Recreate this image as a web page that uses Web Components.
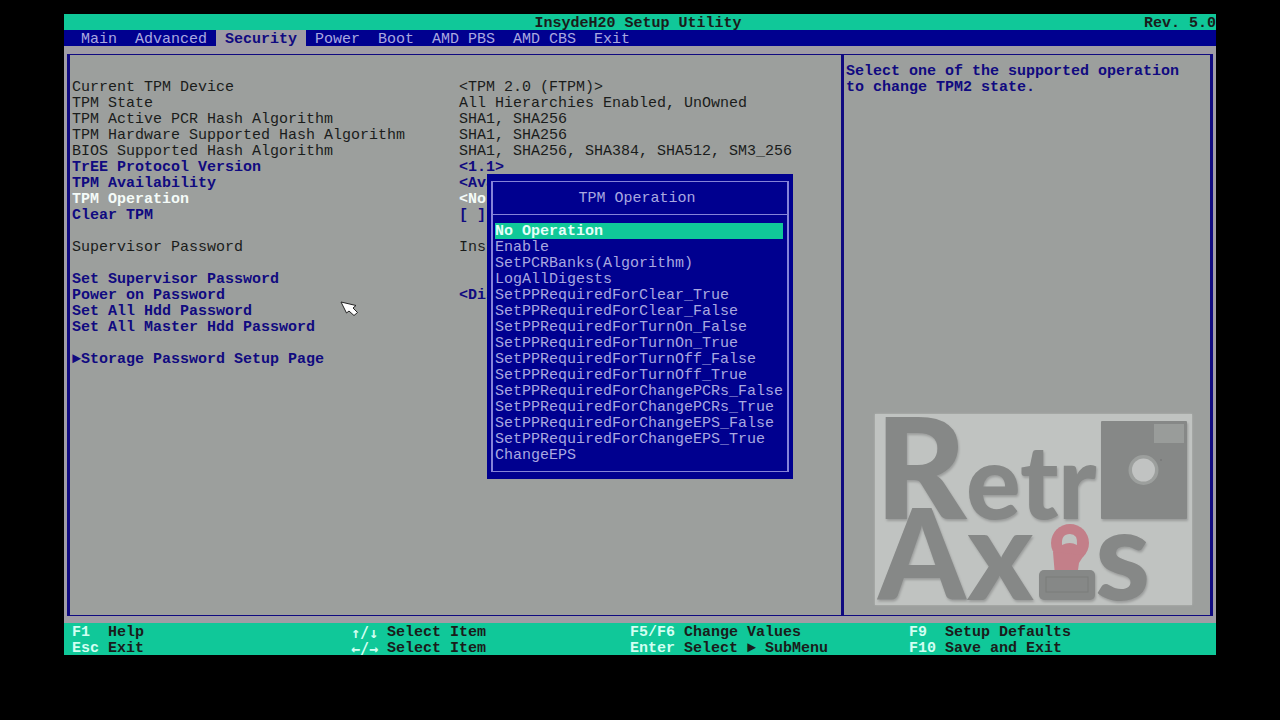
<!DOCTYPE html>
<html lang="en">
<head>
<meta charset="utf-8">
<title>InsydeH20 Setup Utility</title>
<style>
  html { background: #000; }
  body {
    margin: 0;
    font: 15px/18px "Liberation Mono", "DejaVu Sans Mono", monospace;
    --row: 16px;
    --bar-line: 20px;
    --teal: #10c899;
    --navy: #00008f;
    --ink-blue: #100a80;
    --ink: #1a1c1b;
    --panel: #9c9f9d;
    --edge: #a09da5;
    --lilac: #a9a8e0;
    --white: #f4fbf8;
  }
</style>
</head>
<body>
<setup-screen>
  <title-bar slot="top">InsydeH20 Setup Utility<span slot="rev">Rev. 5.0</span></title-bar>
  <menu-bar slot="top">
    <menu-tab>Main</menu-tab>
    <menu-tab>Advanced</menu-tab>
    <menu-tab current>Security</menu-tab>
    <menu-tab>Power</menu-tab>
    <menu-tab>Boot</menu-tab>
    <menu-tab>AMD PBS</menu-tab>
    <menu-tab>AMD CBS</menu-tab>
    <menu-tab>Exit</menu-tab>
  </menu-bar>

  <setting-row label="Current TPM Device">&lt;TPM 2.0 (FTPM)&gt;</setting-row>
  <setting-row label="TPM State">All Hierarchies Enabled, UnOwned</setting-row>
  <setting-row label="TPM Active PCR Hash Algorithm">SHA1, SHA256</setting-row>
  <setting-row label="TPM Hardware Supported Hash Algorithm">SHA1, SHA256</setting-row>
  <setting-row label="BIOS Supported Hash Algorithm">SHA1, SHA256, SHA384, SHA512, SM3_256</setting-row>
  <setting-row kind="select" label="TrEE Protocol Version" value="1.1"></setting-row>
  <setting-row kind="select" label="TPM Availability" value="Available"></setting-row>
  <setting-row kind="select" label="TPM Operation" value="No Operation" active></setting-row>
  <setting-row kind="check" label="Clear TPM"></setting-row>
  <setting-row gap label="Supervisor Password">Installed</setting-row>
  <setting-row gap kind="action" label="Set Supervisor Password"></setting-row>
  <setting-row kind="select" label="Power on Password" value="Disabled"></setting-row>
  <setting-row kind="action" label="Set All Hdd Password"></setting-row>
  <setting-row kind="action" label="Set All Master Hdd Password"></setting-row>
  <setting-row gap kind="page" label="Storage Password Setup Page"></setting-row>

  <span slot="help">Select one of the supported operation to change TPM2 state.</span>

  <key-hints slot="keys">
    <key-hint key="F1">Help</key-hint>
    <key-hint key="↑/↓">Select Item</key-hint>
    <key-hint key="F5/F6" wide>Change Values</key-hint>
    <key-hint key="F9">Setup Defaults</key-hint>
    <key-hint key="Esc">Exit</key-hint>
    <key-hint key="←/→">Select Item</key-hint>
    <key-hint key="Enter" wide>Select ► SubMenu</key-hint>
    <key-hint key="F10">Save and Exit</key-hint>
  </key-hints>

  <brand-mark slot="over"></brand-mark>
  <option-popup slot="over" heading="TPM Operation">
    <popup-option selected>No Operation</popup-option>
    <popup-option>Enable</popup-option>
    <popup-option>SetPCRBanks(Algorithm)</popup-option>
    <popup-option>LogAllDigests</popup-option>
    <popup-option>SetPPRequiredForClear_True</popup-option>
    <popup-option>SetPPRequiredForClear_False</popup-option>
    <popup-option>SetPPRequiredForTurnOn_False</popup-option>
    <popup-option>SetPPRequiredForTurnOn_True</popup-option>
    <popup-option>SetPPRequiredForTurnOff_False</popup-option>
    <popup-option>SetPPRequiredForTurnOff_True</popup-option>
    <popup-option>SetPPRequiredForChangePCRs_False</popup-option>
    <popup-option>SetPPRequiredForChangePCRs_True</popup-option>
    <popup-option>SetPPRequiredForChangeEPS_False</popup-option>
    <popup-option>SetPPRequiredForChangeEPS_True</popup-option>
    <popup-option>ChangeEPS</popup-option>
  </option-popup>
  <mouse-pointer slot="over"></mouse-pointer>
</setup-screen>

<script>
const define = (name, render, ready) => customElements.define(name, class extends HTMLElement {
  constructor() {
    super();
    this.attachShadow({ mode: "open" });
  }
  connectedCallback() {
    this.shadowRoot.innerHTML = render(this);
    if (ready) ready(this);
  }
});
const esc = s => (s || "").replace(/&/g, "&amp;").replace(/</g, "&lt;").replace(/>/g, "&gt;");

define("setup-screen", () => `
  <style>
    :host { display: flex; min-height: 100vh; box-sizing: border-box; padding: 14px 5% 65px; background: #000; }
    .screen { position: relative; flex: 1; min-width: 0; display: flex; flex-direction: column; background: var(--edge); }
    main { flex: 1; display: grid; grid-template-columns: minmax(0, 1fr) 41ch; padding: 8px 3px 7px; }
    section, aside {
      box-sizing: border-box; background: var(--panel);
      border: solid var(--ink-blue); border-width: 1px 3px 1px 3px;
    }
    section { padding: 24px 2px; }
    aside {
      border-left: 0; padding: 9px 2ch 9px 2px;
      color: var(--ink-blue); font-weight: bold; line-height: var(--row);
    }
  </style>
  <div class="screen">
    <slot name="top"></slot>
    <main><section><slot></slot></section><aside><slot name="help"></slot></aside></main>
    <slot name="keys"></slot>
    <slot name="over"></slot>
  </div>`);

define("title-bar", () => `
  <style>
    :host { display: block; background: var(--teal); color: var(--ink); line-height: var(--bar-line); }
    header { display: grid; grid-template-columns: 1fr auto 1fr; height: var(--row); font-weight: bold; }
    h1 { margin: 0; padding-right: 4px; grid-column: 2; font: inherit; }
    .rev { text-align: right; }
  </style>
  <header><h1><slot></slot></h1><div class="rev"><slot name="rev"></slot></div></header>`);

define("menu-bar", () => `
  <style>
    :host { display: block; background: var(--navy); line-height: var(--bar-line); }
    nav { display: flex; height: var(--row); padding-left: 8px; }
  </style>
  <nav><slot></slot></nav>`);

define("menu-tab", el => `
  <style>
    :host { display: block; }
    a { display: block; height: var(--row); padding: 0 1ch; color: var(--lilac); text-decoration: none; white-space: nowrap; }
    a[aria-current] { background: var(--edge); color: var(--ink-blue); font-weight: bold; }
  </style>
  <a href="#" ${el.hasAttribute("current") ? 'aria-current="page"' : ""}><slot></slot></a>`);

define("setting-row", el => {
  const kind = el.getAttribute("kind");
  const label = esc(el.getAttribute("label"));
  const views = {
    select: () => `<label for="v">${label}</label>
      <select id="v"><option>&lt;${esc(el.getAttribute("value"))}&gt;</option></select>`,
    check: () => `<label for="v">${label}</label><span class="box">[<input id="v" type="checkbox">]</span>`,
    action: () => `<button type="button">${label}</button>`,
    page: () => `<a href="#">►${label}</a>`
  };
  const view = views[kind] || (() => `<span>${label}</span><span><slot></slot></span>`);
  return `
  <style>
    :host { display: grid; grid-template-columns: 43ch minmax(0, 1fr); grid-template-rows: 18px; height: var(--row); white-space: nowrap; color: var(--ink); }
    :host([gap]) { margin-top: var(--row); }
    :host([kind]) { color: var(--ink-blue); font-weight: bold; }
    :host([active]) { color: var(--white); }
    button, select, a, input {
      appearance: none; margin: 0; padding: 0; border: 0; outline: 0; background: none;
      font: inherit; color: inherit; text-decoration: none; text-align: left;
    }
    select { justify-self: start; height: 18px; }
    .box { display: flex; }
    input { width: 1ch; height: 18px; }
    input:checked { background: currentColor; }
  </style>${view()}`;
});

define("key-hints", () => `
  <style>
    :host { display: block; background: var(--teal); line-height: var(--bar-line); }
    footer { display: grid; grid-template-columns: repeat(4, minmax(0, 1fr)); padding: 0 28px 0 8px; }
  </style>
  <footer><slot></slot></footer>`);

define("key-hint", el => `
  <style>
    :host { display: grid; grid-template-columns: 4ch 1fr; height: var(--row); white-space: nowrap; font-weight: bold; color: var(--ink); }
    :host([wide]) { grid-template-columns: 6ch 1fr; }
    kbd { font: inherit; color: #d2fff2; }
    :host([key="↑/↓"]) kbd, :host([key="←/→"]) kbd { font-family: "DejaVu Sans Mono", monospace; }
  </style>
  <kbd>${esc(el.getAttribute("key"))}</kbd><span><slot></slot></span>`);

define("option-popup", el => `
  <style>
    :host {
      position: absolute; top: 160px; left: 0; right: 0; margin: 0 auto; width: fit-content;
      padding: 7px 4px; background: var(--navy); color: var(--lilac);
    }
    .frame { border: solid #8583d8; border-width: 1px 2px; }
    h2 { margin: 0; padding: 8px 6px 6px 0; font: inherit; text-align: center; border-bottom: 1px solid #8583d8; }
    .list { padding: 8px 4px 8px 2px; }
  </style>
  <div class="frame" role="dialog" aria-labelledby="h">
    <h2 id="h">${esc(el.getAttribute("heading"))}</h2>
    <div class="list" role="listbox" aria-labelledby="h"><slot></slot></div>
  </div>`);

define("popup-option", el => `
  <style>
    :host { display: block; height: var(--row); }
    :host([selected]) { background: var(--teal); }
    button {
      display: block; width: 100%; height: 18px; margin: 0; padding: 0; border: 0;
      background: none; font: inherit; color: inherit; text-align: left; white-space: nowrap;
    }
    :host([selected]) button { color: #e4fff8; font-weight: bold; }
  </style>
  <button type="button" role="option" aria-selected="${el.hasAttribute("selected")}"><slot></slot></button>`,
  el => el.addEventListener("click", () => {
    for (const o of el.parentElement.children) o.toggleAttribute("selected", o === el);
  }));

define("mouse-pointer", () => `
  <style>
    :host { position: absolute; left: 276px; top: 287px; width: 18px; height: 16px; }
    svg { display: block; }
  </style>
  <svg width="18" height="16" viewBox="0 0 18 16" aria-hidden="true">
    <path d="M1 1 16 4.500 13 7 17.500 11.500 14 14.500 9 10 6.500 12Z" fill="#fff" stroke="#222" stroke-width="1" stroke-linejoin="round"/>
  </svg>`);

define("brand-mark", () => `
  <style>
    :host { position: absolute; right: 24px; bottom: 50px; width: 317px; height: 191px; }
    svg { display: block; filter: drop-shadow(0 0 1px #b4b7b5); }
    text { font-family: Lato, "Open Sans", sans-serif; font-weight: 900; fill: #868887; }
    .ink { fill: #868887; }
    .letters { filter: drop-shadow(1px 2px 1px #9a9c9b); }
  </style>
  <svg width="317" height="191" viewBox="0 0 317 191" role="img" aria-label="Retro Axis">
    <rect width="317" height="191" fill="#c0c3c1"/>
    <g class="letters">
      <text y="105"><tspan x="0" font-size="141">R</tspan><tspan x="91 145 183" font-size="102">etr</tspan></text>
      <text y="186" x="3 92 220" font-size="125">Axs</text>
      <rect class="ink" x="226" y="7" width="86" height="98" rx="1"/>
      <rect class="ink" x="164" y="156" width="56" height="30" rx="5"/>
    </g>
    <rect x="279" y="10" width="30" height="19" fill="#999c9a"/>
    <circle cx="268.500" cy="56" r="15" fill="#9c9f9d"/>
    <circle cx="268.500" cy="56" r="11.500" fill="#c1c3c2"/>
    <circle cx="286" cy="46" r="1" fill="#777978"/>
    <rect x="171" y="163" width="42" height="15" fill="none" stroke="#7a7c7b"/>
    <g fill="#c37f89">
      <circle cx="195" cy="129" r="19"/>
      <path d="M178 138 179.500 156H203L204 149 209 141Z"/>
    </g>
    <path fill="#c0c3c1" d="M187 131Q186 120 195 120 203 120 202 131 195 127 187 131Z"/>
  </svg>`);
</script>
</body>
</html>
